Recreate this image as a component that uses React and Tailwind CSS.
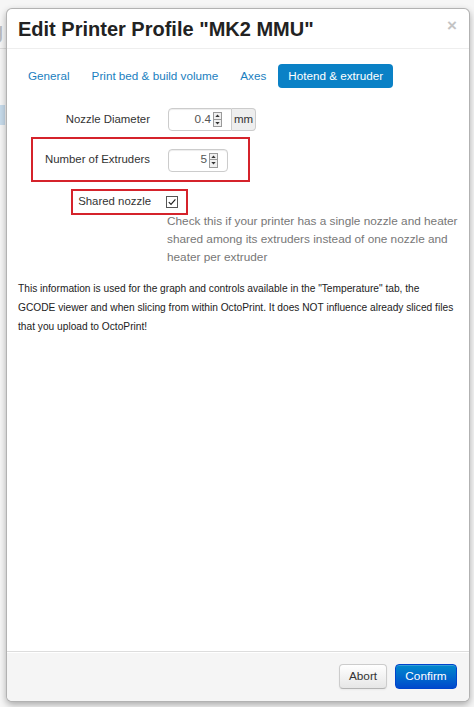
import React, { useState } from 'react';

const Spinner = () => (
    <span className="ml-[2px] flex h-[15px] w-[9px] flex-col border border-[#9a9a9a] bg-[#f0f0f0]">
        <svg viewBox="0 0 8 6" className="h-1/2 w-full border-b border-[#9a9a9a]">
            <path d="M1.5 4.5 L4 1.5 L6.5 4.5 Z" fill="#333" />
        </svg>
        <svg viewBox="0 0 8 6" className="h-1/2 w-full">
            <path d="M1.5 1.5 L4 4.5 L6.5 1.5 Z" fill="#333" />
        </svg>
    </span>
);

const NumberInput = ({ value, width, addon }) => (
    <div className="flex">
        <div
            className={`flex h-[23px] items-center justify-end border border-[#ccc] bg-white pr-[9px] text-[11.8px] text-[#555] shadow-[inset_0_1px_1px_rgba(0,0,0,0.075)] ${addon ? 'rounded-l-[4px]' : 'rounded-[4px]'} ${width}`}
        >
            <span>{value}</span>
            <Spinner />
        </div>
        {addon && (
            <span className="flex h-[23px] w-[24px] items-center justify-center rounded-r-[4px] border border-l-0 border-[#ccc] bg-[#eee] text-[11.5px] text-[#333]">
                {addon}
            </span>
        )}
    </div>
);

const tabs = ['General', 'Print bed & build volume', 'Axes', 'Hotend & extruder'];

const App = () => {
    const [active, setActive] = useState('Hotend & extruder');
    const [shared, setShared] = useState(true);

    return (
        <div className="relative min-h-[707px] w-[474px] bg-[#f6f6f6] pl-[6px] pt-[8px] font-['Liberation_Sans',Arial,sans-serif] text-[#333]">
            {/* bits of the page behind the dialog */}
            <span className="absolute left-[-9px] top-[14px] text-[22px] text-[#bbb]">g</span>
            <span className="absolute left-0 top-[48px] h-px w-[6px] bg-[#ddd]" />
            <span className="absolute left-0 top-[105px] h-[20px] w-[5px] bg-[#c7dbeb]" />

            <div className="relative flex h-[694px] w-[464px] flex-col overflow-hidden rounded-[6px] border border-black/30 bg-white shadow-[0_3px_7px_rgba(0,0,0,0.3)]">
                {/* header */}
                <div className="flex h-[40px] shrink-0 items-center justify-between border-b border-[#eee] pl-[11px] pr-[12px]">
                    <h3 className="text-[20px] font-bold leading-none text-[#222]">Edit Printer Profile "MK2 MMU"</h3>
                    <button className="mt-[-6px] text-[17px] font-bold leading-none text-[#c4c4c4]">×</button>
                </div>

                {/* body */}
                <div className="flex-1 px-[11px] pt-[14px]">
                    <ul className="flex gap-[2px]">
                        {tabs.map((t) => (
                            <li key={t}>
                                <button
                                    onClick={() => setActive(t)}
                                    className={`h-[24px] rounded-[4px] px-[10px] text-[11.7px] leading-[24px] ${active === t ? 'bg-[#0a81c6] text-white' : 'text-[#1a80c0]'}`}
                                >
                                    {t}
                                </button>
                            </li>
                        ))}
                    </ul>

                    <div className="mt-[20px]">
                        <div className="flex items-center">
                            <label className="w-[132px] text-right text-[11.4px] text-[#333]">Nozzle Diameter</label>
                            <div className="ml-[18px]">
                                <NumberInput value="0.4" width="w-[64px]" addon="mm" />
                            </div>
                        </div>

                        <div className="ml-[13px] mt-[6px] flex h-[45px] w-[219px] items-center border-2 border-[#d5232b] pt-[1px]">
                            <label className="w-[117px] text-right text-[11.4px] text-[#333]">Number of Extruders</label>
                            <div className="ml-[18px]">
                                <NumberInput value="5" width="w-[60px]" />
                            </div>
                        </div>

                        <div className="ml-[53px] mt-[7px] flex h-[26px] w-[117px] items-center border-2 border-[#d5232b]">
                            <label className="w-[78px] text-right text-[11.4px] text-[#333]">Shared nozzle</label>
                            <button
                                onClick={() => setShared(!shared)}
                                className="ml-[15px] flex h-[12px] w-[12px] items-center justify-center border border-[#555] bg-white"
                            >
                                {shared && (
                                    <svg viewBox="0 0 10 10" className="h-[10px] w-[10px]">
                                        <path d="M1.8 5.2 L4 7.4 L8.4 2.4" fill="none" stroke="#222" strokeWidth="1.2" />
                                    </svg>
                                )}
                            </button>
                        </div>

                        <p className="ml-[149px] mt-[-3px] w-[298px] text-[11.8px] leading-[18px] text-[#777]">
                            Check this if your printer has a single nozzle and heater shared among its extruders instead of one nozzle and heater per extruder
                        </p>
                    </div>

                    <p className="mt-[13px] w-[442px] text-[10.2px] leading-[19px] text-[#222]">
                        This information is used for the graph and controls available in the "Temperature" tab, the
                        <br />
                        GCODE viewer and when slicing from within OctoPrint. It does NOT influence already sliced files that you upload to OctoPrint!
                    </p>
                </div>

                {/* footer */}
                <div className="flex h-[50px] shrink-0 items-center justify-end gap-[8px] border-t border-[#ddd] bg-[#f5f5f5] pr-[12px] shadow-[inset_0_1px_0_#fff]">
                    <button className="h-[25px] w-[48px] rounded-[4px] border border-[#ccc] border-b-[#b3b3b3] bg-gradient-to-b from-white to-[#e6e6e6] text-[11.8px] text-[#333] shadow-[inset_0_1px_0_rgba(255,255,255,0.2),0_1px_2px_rgba(0,0,0,0.05)]">
                        Abort
                    </button>
                    <button className="h-[25px] w-[62px] rounded-[4px] border border-[#0044cc] bg-gradient-to-b from-[#0088cc] to-[#0048cc] text-[11.8px] text-white shadow-[inset_0_1px_0_rgba(255,255,255,0.2)]">
                        Confirm
                    </button>
                </div>
            </div>
        </div>
    );
};

export default App;
